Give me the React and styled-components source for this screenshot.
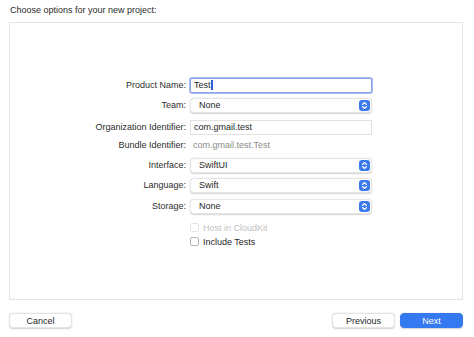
import React from 'react'
import { styled, createGlobalStyle } from 'styled-components'

const Global = createGlobalStyle`
  html, body { margin: 0; padding: 0; background: #ffffff; }
  body { font-family: "Liberation Sans", Arial, sans-serif; color: #262626; }
`

const Window = styled.div`
  width: 474px;
  height: 337px;
  display: flex;
  flex-direction: column;
  padding: 4px 11px 0 9px;
  box-sizing: border-box;
`

const Title = styled.div`
  font-size: 9px;
  height: 18px;
  line-height: 13px;
  padding-left: 1px;
  color: #2b2b2b;
`

const Panel = styled.div`
  height: 278px;
  border: 1px solid #e3e3e3;
  box-sizing: border-box;
  display: flex;
  align-items: center;
  justify-content: center;
  padding: 3px 14px 0 0;
`

const Form = styled.div`
  display: flex;
  flex-direction: column;
  width: 286px;
`

const Row = styled.div`
  display: grid;
  grid-template-columns: 100px 182px;
  column-gap: 4px;
  align-items: center;
  height: ${(p) => p.$h || 15}px;
  margin-top: ${(p) => p.$mt || 0}px;
`

const Label = styled.div`
  font-size: 9px;
  text-align: right;
  color: #2e2e2e;
  white-space: nowrap;
`

const TextField = styled.div`
  height: 15px;
  box-sizing: border-box;
  border: 1px solid ${(p) => (p.$focus ? '#8aa2e8' : '#e2e2e2')};
  box-shadow: ${(p) => (p.$focus ? '0 0 0 1px #a9bbef' : 'none')};
  border-radius: ${(p) => (p.$focus ? 2 : 0)}px;
  background: #fff;
  font-size: 9px;
  display: flex;
  align-items: center;
  padding-left: 3px;
  color: #1f1f1f;
`

const Caret = styled.span`
  display: inline-block;
  width: 1.5px;
  height: 10px;
  background: #2c5fd8;
  margin-left: 0.5px;
`

const Popup = styled.div`
  height: 15px;
  box-sizing: border-box;
  border-radius: 4px;
  background: #fff;
  border: 1px solid #e6e6e6;
  box-shadow: 0 0.5px 1.5px rgba(0, 0, 0, 0.18);
  font-size: 9px;
  display: flex;
  align-items: center;
  justify-content: space-between;
  padding: 0 1px 0 8px;
  color: #1f1f1f;
`

const Stepper = styled.span`
  width: 11px;
  height: 11px;
  border-radius: 3px;
  background: #3a78ee;
  display: flex;
  align-items: center;
  justify-content: center;
`

const StaticValue = styled.div`
  font-size: 9px;
  color: #8c8c8c;
  padding-left: 3px;
`

const Check = styled.label`
  display: flex;
  align-items: center;
  gap: 4px;
  font-size: 9px;
  color: ${(p) => (p.$disabled ? '#c2c2c2' : '#262626')};
  grid-column: 2;
`

const Box = styled.span`
  width: 9px;
  height: 9px;
  box-sizing: border-box;
  border-radius: 2px;
  border: 1px solid ${(p) => (p.$disabled ? '#e4e4e4' : '#b4b4b4')};
  background: #fff;
`

const Footer = styled.div`
  display: flex;
  align-items: center;
  gap: 5px;
  margin-top: 13px;
`

const Button = styled.div`
  width: 63px;
  height: 15px;
  box-sizing: border-box;
  border-radius: 4px;
  font-size: 9px;
  display: flex;
  align-items: center;
  justify-content: center;
  background: ${(p) => (p.$primary ? '#3479f0' : '#ffffff')};
  color: ${(p) => (p.$primary ? '#ffffff' : '#262626')};
  border: 1px solid ${(p) => (p.$primary ? '#3479f0' : '#e4e4e4')};
  box-shadow: 0 0.5px 1.5px rgba(0, 0, 0, 0.18);
  margin-left: ${(p) => (p.$push ? 'auto' : '0')};
`

const Arrows = () => (
  <svg width="7" height="9" viewBox="0 0 7 9" fill="none">
    <path d="M1.5 3.5 L3.5 1.5 L5.5 3.5" stroke="#fff" strokeWidth="1.1" strokeLinecap="round" strokeLinejoin="round" />
    <path d="M1.5 5.5 L3.5 7.5 L5.5 5.5" stroke="#fff" strokeWidth="1.1" strokeLinecap="round" strokeLinejoin="round" />
  </svg>
)

const Select = ({ value }) => (
  <Popup>
    <span>{value}</span>
    <Stepper>
      <Arrows />
    </Stepper>
  </Popup>
)

export default function App() {
  return (
    <>
      <Global />
      <Window>
        <Title>Choose options for your new project:</Title>
        <Panel>
          <Form>
            <Row>
              <Label>Product Name:</Label>
              <TextField $focus>
                Test
                <Caret />
              </TextField>
            </Row>
            <Row $mt={5}>
              <Label>Team:</Label>
              <Select value="None" />
            </Row>
            <Row $mt={7}>
              <Label>Organization Identifier:</Label>
              <TextField>com.gmail.test</TextField>
            </Row>
            <Row $mt={3}>
              <Label>Bundle Identifier:</Label>
              <StaticValue>com.gmail.test.Test</StaticValue>
            </Row>
            <Row $mt={5}>
              <Label>Interface:</Label>
              <Select value="SwiftUI" />
            </Row>
            <Row $mt={5}>
              <Label>Language:</Label>
              <Select value="Swift" />
            </Row>
            <Row $mt={6}>
              <Label>Storage:</Label>
              <Select value="None" />
            </Row>
            <Row $mt={8} $h={12}>
              <Check $disabled>
                <Box $disabled />
                Host in CloudKit
              </Check>
            </Row>
            <Row $mt={2} $h={12}>
              <Check>
                <Box />
                Include Tests
              </Check>
            </Row>
          </Form>
        </Panel>
        <Footer>
          <Button>Cancel</Button>
          <Button $push>Previous</Button>
          <Button $primary>Next</Button>
        </Footer>
      </Window>
    </>
  )
}
